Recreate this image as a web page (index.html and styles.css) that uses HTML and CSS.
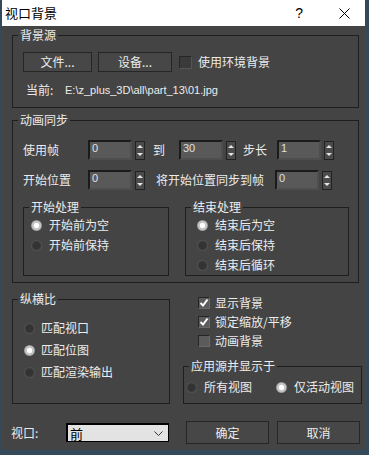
FILE: index.html
```html
<!DOCTYPE html>
<html lang="zh">
<head>
    <meta charset="UTF-8">
    <title>视口背景</title>
    <link rel="stylesheet" href="styles.css">
</head>
<body>

<div class="window">
    <div class="titlebar">
        <span class="title">视口背景</span>
        <span class="help">?</span>
        <svg class="close" width="11" height="11" viewBox="0 0 11 11"><path d="M0.5 0.5 L10.5 10.5 M10.5 0.5 L0.5 10.5" stroke="#000" stroke-width="1" fill="none"/></svg>
    </div>

    <div class="content">
        <fieldset class="group wide source">
            <legend>背景源</legend>
            <div class="source-row">
                <button class="btn btn-file">文件...</button>
                <button class="btn btn-device">设备...</button>
                <span class="check env"><span class="box disabled"></span>使用环境背景</span>
            </div>
            <div class="current-row">
                <span class="current-label">当前:</span>
                <span class="path">E:\z_plus_3D\all\part_13\01.jpg</span>
            </div>
        </fieldset>

        <fieldset class="group wide anim">
            <legend>动画同步</legend>
            <div class="spin-row">
                <span class="lbl lbl-first">使用帧</span>
                <span class="spinner"><span class="field">0</span><span class="spin"><i class="up"></i><i class="down"></i></span></span>
                <span class="lbl lbl-to">到</span>
                <span class="spinner"><span class="field">30</span><span class="spin"><i class="up"></i><i class="down"></i></span></span>
                <span class="lbl lbl-step">步长</span>
                <span class="spinner"><span class="field">1</span><span class="spin"><i class="up"></i><i class="down"></i></span></span>
            </div>
            <div class="spin-row">
                <span class="lbl lbl-first">开始位置</span>
                <span class="spinner"><span class="field">0</span><span class="spin"><i class="up"></i><i class="down"></i></span></span>
                <span class="lbl lbl-sync">将开始位置同步到帧</span>
                <span class="spinner"><span class="field">0</span><span class="spin"><i class="up"></i><i class="down"></i></span></span>
            </div>
            <div class="sub-row">
                <fieldset class="group sub sub-start">
                    <legend>开始处理</legend>
                    <div class="radio-row"><span class="radio on"></span>开始前为空</div>
                    <div class="radio-row"><span class="radio"></span>开始前保持</div>
                </fieldset>
                <fieldset class="group sub sub-end">
                    <legend>结束处理</legend>
                    <div class="radio-row"><span class="radio on"></span>结束后为空</div>
                    <div class="radio-row"><span class="radio"></span>结束后保持</div>
                    <div class="radio-row"><span class="radio"></span>结束后循环</div>
                </fieldset>
            </div>
        </fieldset>

        <div class="lower">
            <fieldset class="group aspect">
                <legend>纵横比</legend>
                <div class="radio-row"><span class="radio"></span>匹配视口</div>
                <div class="radio-row"><span class="radio on"></span>匹配位图</div>
                <div class="radio-row"><span class="radio"></span>匹配渲染输出</div>
            </fieldset>

            <div class="right-col">
                <div class="check-row"><span class="box checked"></span>显示背景</div>
                <div class="check-row"><span class="box checked"></span>锁定缩放/平移</div>
                <div class="check-row"><span class="box"></span>动画背景</div>

                <fieldset class="group apply">
                    <legend>应用源并显示于</legend>
                    <div class="apply-row">
                        <span class="apply-item"><span class="radio"></span>所有视图</span>
                        <span class="apply-item"><span class="radio on"></span>仅活动视图</span>
                    </div>
                </fieldset>
            </div>
        </div>

        <div class="footer">
            <span class="vp-label">视口:</span>
            <div class="select">
                <span>前</span>
                <svg width="9" height="5" viewBox="0 0 9 5"><path d="M0.5 0.5 L4.5 4.5 L8.5 0.5" stroke="#333" stroke-width="1" fill="none"/></svg>
            </div>
            <button class="btn btn-ok">确定</button>
            <button class="btn btn-cancel">取消</button>
        </div>
    </div>
</div>

</body>
</html>
```

FILE: styles.css
```css
* { box-sizing: border-box; }
body {
    margin: 0;
    background: #34495a;
    font-family: "Noto Sans CJK SC", "Liberation Sans", sans-serif;
    font-size: 12px;
    color: #ececec;
}
.window { width: 363px; height: 450px; margin-left: 2px; background: #444; overflow: hidden; }

/* title bar */
.titlebar { height: 26px; background: #fff; color: #000; display: flex; align-items: center; }
.title { font-size: 13px; line-height: 16px; margin-left: 3px; }
.help { font-family: "Liberation Sans", sans-serif; font-size: 14px; margin-left: auto; margin-right: 36px; }
.close { margin-right: 15px; }

.content { padding: 2px 1px 0 10px; }

/* group boxes */
.group {
    margin: 0;
    min-width: 0;
    border: 1px solid #1e1e1e;
    padding: 0 0 0 5px;
}
.group legend { padding: 0 2px; font-size: 12px; line-height: 14px; }
.group.wide { margin-right: 5px; }

.source { padding-top: 10px; padding-bottom: 9px; }
.source-row { display: flex; align-items: center; margin-left: 5px; }
.btn {
    font-family: "Noto Sans CJK SC", "Liberation Sans", sans-serif;
    font-size: 12px;
    line-height: 14px;
    color: #ececec;
    background: #474747;
    border: 1px solid #262626;
    padding: 0;
}
.btn-file { width: 69px; height: 20px; }
.btn-device { width: 74px; height: 20px; margin-left: 6px; }
.check { display: flex; align-items: center; line-height: 14px; }
.env { margin-left: 7px; }
.box {
    display: inline-block;
    width: 12px;
    height: 12px;
    background: #5b5b5b;
    border: 1px solid;
    border-color: #252525 #6a6a6a #6a6a6a #252525;
    margin-right: 5px;
}
.box.disabled { width: 13px; height: 13px; background: #3a3a3a; border-color: #262626 #555 #555 #262626; margin-right: 6px; }
.box.checked {
    background: #5b5b5b url("data:image/svg+xml;utf8,<svg xmlns='http://www.w3.org/2000/svg' width='10' height='10'><path d='M1.5 5 L4 7.5 L8.5 1.5' stroke='white' stroke-width='2' fill='none'/></svg>") center no-repeat;
}
.current-row { display: flex; align-items: center; height: 16px; margin-top: 10px; margin-left: 8px; }
.current-label { width: 39px; line-height: 14px; }
.path { font-family: "Liberation Sans", sans-serif; font-size: 11px; }

/* animation sync */
.anim { margin-top: 5px; padding-top: 13px; padding-bottom: 6px; }
.spin-row { display: flex; align-items: center; height: 20px; margin-left: 5px; margin-bottom: 10px; }
.lbl { line-height: 14px; }
.lbl-first { width: 65px; }
.lbl-to { width: 26px; margin-left: 8px; }
.lbl-step { width: 34px; margin-left: 7px; }
.lbl-sync { width: 119px; margin-left: 11px; }
.spinner { display: flex; align-items: center; }
.field {
    width: 44px;
    height: 20px;
    background: #595959;
    border: 2px solid;
    border-color: #1b1b1b #4e4e4e #4e4e4e #1b1b1b;
    font-family: "Liberation Sans", sans-serif;
    font-size: 11px;
    line-height: 13px;
    padding-left: 2px;
    color: #e0e0e0;
}
.spin {
    width: 10px;
    height: 19px;
    margin-left: 3px;
    background: #4b4b4b;
    border: 1px solid #222;
    display: flex;
    flex-direction: column;
    align-items: center;
    justify-content: space-between;
    padding: 3px 0;
}
.spin i { display: block; width: 0; height: 0; border-left: 3px solid transparent; border-right: 3px solid transparent; }
.spin .up { border-bottom: 3px solid #e6e6e6; }
.spin .down { border-top: 3px solid #e6e6e6; }

.sub-row { display: flex; gap: 16px; margin-left: 5px; }
.sub { padding-top: 1px; }
.sub-start { width: 146px; }
.sub-end { width: 164px; }
.radio-row { display: flex; align-items: center; height: 20px; line-height: 14px; }
.sub-start .radio-row { margin-left: 2px; }
.sub-end .radio-row { margin-left: 6px; }
.radio {
    display: inline-block;
    width: 11px;
    height: 11px;
    border-radius: 50%;
    background: radial-gradient(circle at 50% 50%, #333 0 40%, #3e3e3e 55%, #6c6c6c 85%, #555 100%);
    margin-right: 7px;
}
.radio.on { background: radial-gradient(circle, #fff 0 30%, #c4c4c4 40% 55%, #7a7a7a 75%, #4a4a4a 100%); }

/* lower section */
.lower { display: grid; grid-template-columns: 158px 179px; column-gap: 13px; margin-top: 9px; }
.aspect { padding-top: 11px; }
.aspect .radio-row { height: 22px; margin-left: 6px; }
.aspect .radio { margin-right: 6px; }
.right-col { padding-top: 1px; }
.check-row { display: flex; align-items: center; height: 19px; margin-left: 15px; line-height: 14px; }
.apply { margin-top: 9px; padding-top: 4px; padding-bottom: 6px; }
.apply-row { display: flex; align-items: center; height: 20px; margin-left: -3px; line-height: 14px; }
.apply-item { display: flex; align-items: center; }
.apply-item:first-child { width: 90px; }
.apply .radio { margin-right: 7px; }

/* footer */
.footer { display: flex; align-items: center; margin-top: 17px; margin-left: -1px; height: 23px; }
.vp-label { width: 55px; line-height: 14px; }
.select {
    width: 103px;
    height: 19px;
    background: #e3e3e3;
    border: 2px solid #000;
    border-right-width: 1px;
    border-bottom-width: 1px;
    color: #000;
    display: flex;
    align-items: center;
    justify-content: space-between;
    padding: 0 5px 0 2px;
    font-size: 13px;
    line-height: 15px;
}
.btn-ok { width: 83px; height: 23px; margin-left: 17px; }
.btn-cancel { width: 83px; height: 23px; margin-left: 8px; }
```
